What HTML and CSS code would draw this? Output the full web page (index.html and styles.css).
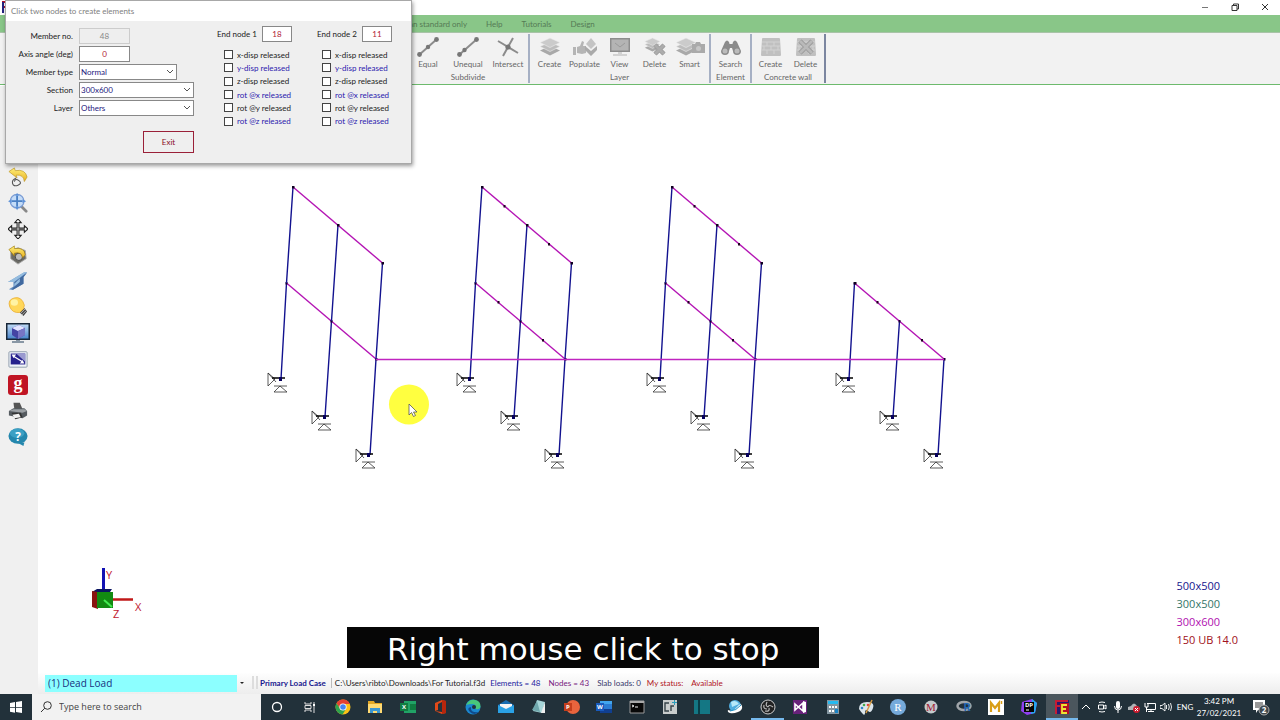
FILE: index.html
```html
<!DOCTYPE html>
<html lang="en">
<head>
<meta charset="utf-8">
<title>Frame modeller</title>
<link rel="stylesheet" href="styles.css">
</head>
<body>
<svg class="defs" aria-hidden="true">
  <defs>
    <linearGradient id="gold" x1="0" y1="0" x2="0" y2="1"><stop offset="0" stop-color="#fff07a"/><stop offset="1" stop-color="#e8b020"/></linearGradient>
    <linearGradient id="screen" x1="0" y1="0" x2="0" y2="1"><stop offset="0" stop-color="#bcd8f4"/><stop offset="1" stop-color="#4b86cc"/></linearGradient>
    <symbol id="layers" viewBox="0 0 22 20"><path d="M11 9l10 4.500-10 5-10-5z" fill="#a9a9a9"/><path d="M11 5l10 4.500-10 5-10-5z" fill="#bdbdbd" stroke="#eee" stroke-width=".6"/><path d="M11 1l10 4.500-10 5-10-5z" fill="#cbcbcb" stroke="#eee" stroke-width=".6"/></symbol>
    <symbol id="wall" viewBox="0 0 22 20"><path d="M2 2q0-1 1-1h16q1 0 1 1l1 16q0 1-1 1H2q-1 0-1-1z" fill="#c0c0c0"/><path d="M2 5h18M2 9h18M2 13h18M7 5v4M14 5v4M4 9v4M11 9v4M18 9v4M7 13v4M14 13v4" stroke="#d2d2d2" fill="none"/></symbol>
    <symbol id="pin" viewBox="-16 -10 26 26"><g fill="none" stroke="#333" stroke-width=".8"><path d="M-13-6V7L-6 0zM-13-6L-5 3M-7 7H6M-1 7L-7 13H6z"/><path d="M-9-1H4" stroke="#000" stroke-width="1.500"/></g><path d="M-2-2h3v4h-3z" fill="#06005c"/></symbol>
    <g id="supports"><use href="#pin" x="265" y="369" width="26" height="26"/><use href="#pin" x="309" y="407" width="26" height="26"/><use href="#pin" x="353" y="445" width="26" height="26"/></g>
    <g id="storey">
      <g stroke="#12128f" stroke-width="1.400"><path d="M286.500 283L281 379M331.500 321L325 417M376 359L370 455"/></g>
      <path d="M286.500 283L376 359" stroke="#b414b4" stroke-width="1.400"/>
      <path d="M285.500 282h2v2.500h-2zM330.500 320h2v2.500h-2zM375.500 358h2v2.500h-2z" fill="#180030"/>
      <use href="#supports"/>
    </g>
    <g id="upper">
      <path d="M293 187L286.500 283M338 225L331.500 321M382.500 263L376 359" stroke="#12128f" stroke-width="1.400"/>
      <path d="M293 187L382.500 263" stroke="#b414b4" stroke-width="1.400"/>
      <path d="M292 186h2.500v2.500h-2.500zM337 224h2.500v2.500h-2.500zM381.500 262h2.500v2.500h-2.500z" fill="#100020"/>
    </g>
    <path id="mid-low" d="M308.500 301h2v2.500h-2zM353 339h2v2.500h-2z" fill="#200020"/>
    <path id="mid-high" d="M314.500 205h2v2.500h-2zM359 243h2v2.500h-2z" fill="#200020"/>
  </defs>
</svg>

<div class="app">
  <header class="titlebar">
    <svg class="logo" viewBox="0 0 12 12"><path d="M1 1h9M1 6h7" stroke="#b0102a" stroke-width="2"/><path d="M2 1v11" stroke="#23237f" stroke-width="2"/></svg>
    <div class="window-buttons">
      <button aria-label="Minimise"><svg viewBox="0 0 8 8"><path d="M1 4.500h6" stroke="#777"/></svg></button>
      <button aria-label="Restore"><svg viewBox="0 0 8 8"><path d="M1 2.500h5v5H1zM2.500 2.500V1h5v5H6" fill="none" stroke="#333"/></svg></button>
      <button aria-label="Close"><svg viewBox="0 0 8 8"><path d="M1 1l6 6M7 1L1 7" fill="none" stroke="#333"/></svg></button>
    </div>
  </header>
  <nav class="menu">
    <a href="#">an standard only</a><a href="#">Help</a><a href="#">Tutorials</a><a href="#">Design</a>
  </nav>
  <section class="ribbon">
    <div class="group subdivide">
      <div class="tools">
        <button><svg viewBox="0 0 22 20"><path d="M2 18L20 2" stroke="#8c8c8c" stroke-width="2"/><g fill="#777"><circle cx="2.500" cy="17.500" r="2.400"/><circle cx="11" cy="10" r="2.200"/><circle cx="19.500" cy="2.500" r="2.400"/></g></svg>Equal</button>
        <button><svg viewBox="0 0 22 20"><path d="M2 18L20 2" stroke="#8c8c8c" stroke-width="2"/><g fill="#777"><circle cx="2.500" cy="17.500" r="2.400"/><circle cx="7.500" cy="13" r="2.200"/><circle cx="19.500" cy="2.500" r="2.400"/></g></svg>Unequal</button>
        <button><svg viewBox="0 0 22 20"><path d="M1 4l20 12M16 1L6 19" stroke="#8c8c8c" stroke-width="2"/><circle cx="11" cy="10" r="2.600" fill="#777"/></svg>Intersect</button>
      </div>
      <span>Subdivide</span>
    </div>
    <div class="group">
      <div class="tools">
        <button><svg viewBox="0 0 22 20"><use href="#layers"/></svg>Create</button>
        <button><svg class="wide" viewBox="0 0 26 20"><path d="M1 10h3v8H1zM5 10l3-1 2-5 2 1-1 4h3v7l-4 1-5-1z" fill="#b5b5b5"/><path d="M19 1l5 6-5 5-5-5z" fill="#c4c4c4"/><path d="M13 9l6 5 6-5v4l-6 6-6-6z" fill="#aaa"/></svg>Populate</button>
        <button><svg viewBox="0 0 22 20"><path d="M1 1h20v14H1z" fill="#8d8d8d"/><path d="M2.500 2.500h17v11h-17z" fill="#b4b4b4"/><path d="M6 6l5 4 5-4" fill="none" stroke="#9a9a9a"/><path d="M9 15h4v2h5v2H4v-2h5z" fill="#d2d2d2"/></svg>View</button>
        <button><svg viewBox="0 0 22 20"><use href="#layers" x="0" y="0" width="17" height="16"/><path d="M11 8l9 9M20 8l-9 9" stroke="#999" stroke-width="4.500"/><path d="M11 8l9 9M20 8l-9 9" stroke="#acacac" stroke-width="3"/></svg>Delete</button>
        <button><svg class="wide" viewBox="0 0 30 20"><use href="#layers" x="0" y="0" width="22" height="20"/><path d="M17 7h3l1-2h4l1 2h4v9H17z" fill="#aaa"/><circle cx="23.500" cy="11.500" r="2.500" fill="#c6c6c6"/></svg>Smart</button>
      </div>
      <span>Layer</span>
    </div>
    <div class="group">
      <div class="tools">
        <button><svg viewBox="0 0 22 20"><path d="M5 5q2-3 4 0l.5 2h3l.5-2q2-3 4 0l4 9q0 4-4 4t-4-4l-1-3h-2l-1 3q0 4-4 4t-4-4z" fill="#8b8b8b"/><circle cx="5" cy="14" r="2.500" fill="#bbb"/><circle cx="17" cy="14" r="2.500" fill="#bbb"/></svg>Search</button>
      </div>
      <span>Element</span>
    </div>
    <div class="group last">
      <div class="tools">
        <button><svg viewBox="0 0 22 20"><use href="#wall"/></svg>Create</button>
        <button><svg viewBox="0 0 22 20"><use href="#wall"/><path d="M5 4l12 12M17 4L5 16" stroke="#929292" stroke-width="4.500"/><path d="M5 4l12 12M17 4L5 16" stroke="#b9b9b9" stroke-width="3"/></svg>Delete</button>
      </div>
      <span>Concrete wall</span>
    </div>
  </section>

  <main class="work">
    <aside class="sidebar">
      <button aria-label="Rotate"><svg viewBox="0 0 22 22"><path d="M1 5l6-4 1 3q11-2 13 7l-3 5q-1-8-9-7l1 3z" fill="url(#gold)" stroke="#bb9420" stroke-width=".7"/><path d="M9 12q-5 2-4 6t6 2 1-5-5 1" fill="none" stroke="#555" stroke-width="1.200"/></svg></button>
      <button aria-label="Zoom extents"><svg viewBox="0 0 22 22"><path d="M14 14l6 6" stroke="#888" stroke-width="3" stroke-linecap="round"/><circle cx="10" cy="9" r="7.500" fill="#c4dcf8" stroke="#7a9cd4" stroke-width="1.500"/><path d="M10 3v12M4 9h12" stroke="#4a80c4" stroke-width="2"/><path d="M10 0l2 3H8zM0 9l4-2v4zM20 9l-4-2v4zM10 19l-2-4h4z" fill="#5c91d8"/></svg></button>
      <button aria-label="Pan"><svg viewBox="0 0 22 22"><path d="M11 0l3.500 4H12v6h6V7.500l4 3.500-4 3.500V12h-6v6h2.500L11 22l-3.500-4H10v-6H4v2.500L0 11l4-3.500V10h6V4H7.500z" fill="#fff" stroke="#222" stroke-width="1.200"/></svg></button>
      <button aria-label="Reset view"><svg viewBox="0 0 22 22"><path d="M3 6l8-3 8 3 1 9-9 6-8-6z" fill="#6b6b65" stroke="#aaa"/><circle cx="12" cy="13" r="4" fill="#bbb" stroke="#444"/><path d="M1 5l6-4v3q11-2 12 7l-3 3q-1-7-9-5v3z" fill="url(#gold)" stroke="#9d780a" stroke-width=".7"/></svg></button>
      <button aria-label="Steel sections"><svg viewBox="0 0 22 22"><path d="M0 12L17 2l4-1-4 5v8L5 21l-4-1 5-3v-5z" fill="#638fc2"/><path d="M0 12L18 1h3L7 12zM7 12v5l9-7V6z" fill="#96bddf"/><path d="M7 12L21 2l-4 5v7L5 21v-2l8-7V8l-6 6z" fill="#41699f"/></svg></button>
      <button aria-label="Hints"><svg viewBox="0 0 22 22"><path d="M13 17l5-5 3 4-4 5z" fill="#444"/><path d="M14 18l5-5M15 20l5-5" stroke="#bbb"/><path d="M2 11Q-1 3 7 1t11 8l-1 4-4 4Q5 18 2 11z" fill="#ffd75a" stroke="#e8a828" stroke-width=".8"/><ellipse cx="7" cy="6" rx="4" ry="3.500" fill="#fff3a4"/></svg></button>
      <button aria-label="3D view"><svg class="big" viewBox="0 0 26 22"><path d="M1 1h24v17H1z" fill="#172638"/><path d="M2.500 2.500h21v14h-21z" fill="url(#screen)"/><path d="M7 6l7-3 6 3v7l-7 4-6-4z" fill="#4444a4"/><path d="M7 6l7-3 6 3-7 3z" fill="#e4e4ff"/><path d="M13 9l7-3v7l-7 4z" fill="#7775c4"/><path d="M11 18h4v1h4v2H7v-2h4z" fill="#8997a5"/></svg></button>
      <button aria-label="Dimension"><svg viewBox="0 0 22 22"><rect x="1" y="3" width="20" height="17" rx="1" fill="#f0f4fa" stroke="#8a98a8"/><path d="M3 5h16v12H3z" fill="#26218d"/><path d="M9 5h10v9z" fill="#9a9ad0"/><path d="M6 8l10 6" stroke="#fff" stroke-width="1.500"/><path d="M4 6h5l-3 4zM18 16h-5l3-4z" fill="#fff"/></svg></button>
      <button aria-label="Search online"><span class="g-icon">g</span></button>
      <button aria-label="Print"><svg viewBox="0 0 22 22"><path d="M6 2h7l3 7H7z" fill="#555"/><path d="M1 11l5-3h12l3 3v5l-5 3-15-3z" fill="#555b60"/><path d="M1 11l5-2h12l3 2-5 2z" fill="#9ba0a4"/><path d="M4 13h10l2 5-8 2z" fill="#333"/><path d="M5 15l7-1 2 4-7 1z" fill="#f2f2f2"/></svg></button>
      <button aria-label="Help"><svg viewBox="0 0 22 22"><ellipse cx="11" cy="10" rx="10.500" ry="8.500" fill="#2487ad"/><path d="M10 17h8l-1 4z" fill="#2487ad"/><ellipse cx="10" cy="7" rx="8" ry="5" fill="#3ba0c4"/><text x="11" y="15" text-anchor="middle" class="help-mark">?</text></svg></button>
    </aside>
    <div class="stage">
      <svg class="model" viewBox="38 86 1242 587" preserveAspectRatio="xMinYMin meet" role="img" aria-label="Structural frame model">
        <use href="#storey"/><use href="#upper"/>
        <g><use href="#storey" x="189"/><use href="#upper" x="189"/><use href="#mid-low" x="189"/><use href="#mid-high" x="189"/></g>
        <g><use href="#storey" x="379"/><use href="#upper" x="379"/><use href="#mid-low" x="379"/><use href="#mid-high" x="379"/></g>
        <g><use href="#storey" x="568"/><use href="#mid-low" x="568"/><path d="M854 282h2.500v2.500h-2.500z" fill="#100020"/></g>
        <path d="M376 359.500H944" stroke="#c024c0" stroke-width="1.400"/>
        <circle cx="409" cy="404.500" r="20" fill="#ffff40"/>
        <path d="M409 404v11l2.500-2.500 2 4 2-1-2-3.500h3.500z" fill="#fff" stroke="#555" stroke-width=".8"/>
        <path d="M103.500 590V568" stroke="#1212b4" stroke-width="3"/>
        <path d="M111 599.500h22" stroke="#c01818" stroke-width="2.500"/>
        <path d="M92 592l5-3h15l-2 3z" fill="#0a1460"/><path d="M92 591l6 1v17l-6-2z" fill="#881410"/>
        <path d="M97 592h16v16H97z" fill="#128a12"/><path d="M104 600l8 7" stroke="#42ec50" stroke-width="2"/>
        <g class="axis"><text x="106" y="579">Y</text><text x="135" y="611">X</text><text x="113" y="618">Z</text></g>
      </svg>
      <ul class="legend"><li>500x500</li><li>300x500</li><li>300x600</li><li>150 UB 14.0</li></ul>
      <p class="caption">Right mouse click to stop</p>
    </div>
  </main>

  <footer class="status">
    <div class="load"><select aria-label="Load case"><option>(1) Dead Load</option></select></div>
    <i class="grip"></i>
    <strong>Primary Load Case</strong>
    <span class="path">C:\Users\ribto\Downloads\For Tutorial.f3d</span>
    <span class="elements">Elements = 48</span>
    <span class="nodes">Nodes = 43</span>
    <span class="slabs">Slab loads: 0</span>
    <span class="mine">My status:</span>
    <span class="mine">Available</span>
  </footer>

  <footer class="taskbar">
    <button class="start" aria-label="Start"><svg viewBox="0 0 12 12"><path d="M0 2l5-1v5H0zM6 1l6-1v6H6zM0 6.700h5v5l-5-1zM6 6.700h6V12l-6-1z" fill="#fff"/></svg></button>
    <label class="search"><svg viewBox="0 0 12 12"><circle cx="7.500" cy="4.500" r="3.800" fill="none" stroke="#333"/><path d="M4.800 7.200L1 11" stroke="#333"/></svg><input type="text" placeholder="Type here to search" aria-label="Search"></label>
    <div class="apps">
      <button aria-label="Cortana"><svg viewBox="0 0 16 16"><circle cx="8" cy="8" r="4.500" fill="none" stroke="#fff" stroke-width="1.300"/></svg></button>
      <button aria-label="Task view"><svg viewBox="0 0 16 16"><path d="M3 3v2h6V3M3 13v-2h6v2M3 6.500h6v3H3zM12 3v2M12 7v7" fill="none" stroke="#ddd"/><path d="M11 5h2v2h-2z" fill="#fff"/></svg></button>
      <button aria-label="Chrome"><svg viewBox="0 0 16 16"><circle cx="8" cy="8" r="7.500" fill="#fbc116"/><path d="M1.500 4.300A7.500 7.500 0 0 1 14.800 5H8L5 9.500z" fill="#e34133"/><path d="M1.500 4.300A7.500 7.500 0 0 0 7.500 15.500L11 10 5 9.500z" fill="#2da24e"/><circle cx="8" cy="8" r="3.600" fill="#fff"/><circle cx="8" cy="8" r="2.800" fill="#4285f4"/></svg></button>
      <button aria-label="File Explorer"><svg viewBox="0 0 16 16"><path d="M1 2h6l1 2h7v10H1z" fill="#e3a827"/><path d="M1 5h14v9H1z" fill="#ffda73"/><path d="M3 9h10v5h-3v-2H6v2H3z" fill="#3c97d2"/></svg></button>
      <button aria-label="Excel"><svg viewBox="0 0 16 16"><path d="M4 2h12v12H4z" fill="#21a366"/><path d="M10 5h6v6h-6z" fill="#107c41"/><path d="M0 4h8v8H0z" fill="#107c41"/><text class="app-letter" x="4" y="10">X</text></svg></button>
      <button aria-label="Office"><svg viewBox="0 0 16 16"><path d="M2 4l7-3 4 1v12l-4 1-7-3 7 1V3L5 5v6l-3 1z" fill="#e24a19"/><path d="M9 1l4 1v12l-4 1z" fill="#b6260c"/></svg></button>
      <button aria-label="Edge"><svg viewBox="0 0 16 16"><circle cx="8" cy="8" r="7.500" fill="#1b88d0"/><path d="M1 6Q4 0 10 1t5.500 7q-1 3-5 2 1-5-3-5T1 6z" fill="#48c77b"/><path d="M6 8q-1 6 8 5-5 4-9 0T6 8z" fill="#104b8c"/><circle cx="9" cy="8" r="2" fill="#23323a"/></svg></button>
      <button aria-label="Mail"><svg viewBox="0 0 16 16"><path d="M0 6l8-5 8 5v8H0z" fill="#176cb0"/><path d="M2 5h12v5H2z" fill="#f4f4f4"/><path d="M0 6l8 4 8-4v8H0z" fill="#2aa1e5"/></svg></button>
      <button aria-label="Notepad"><svg viewBox="0 0 16 16"><path d="M6 1l8 2-3 11-9-2z" fill="#a6d5d8"/><path d="M6 2l-5 9 8 2z" fill="#6fa7ac"/><path d="M14 3v11h-4z" fill="#eee"/></svg></button>
      <button aria-label="PowerPoint"><svg viewBox="0 0 16 16"><circle cx="9" cy="8" r="7" fill="#e9643d"/><path d="M0 4h8v8H0z" fill="#c43e1c"/><text class="app-letter" x="4" y="10">P</text></svg></button>
      <button aria-label="Word"><svg viewBox="0 0 16 16"><path d="M4 2h12v12H4z" fill="#2b7cd3"/><path d="M4 2h12v3H4z" fill="#41a5ee"/><path d="M4 10h12v4H4z" fill="#103f91"/><path d="M0 4h8v8H0z" fill="#185abd"/><text class="app-letter" x="4" y="10">W</text></svg></button>
      <button aria-label="Command Prompt"><svg viewBox="0 0 16 16"><path d="M1 2h14v12H1z" fill="#080808" stroke="#999"/><path d="M1 2h14v2H1z" fill="#aaa"/><path d="M3 6l2 1-2 1M6 8h3" fill="none" stroke="#eee"/></svg></button>
      <button aria-label="Character tool"><svg viewBox="0 0 16 16"><path d="M1 1h14v14H1z" fill="#c8cccc"/><path d="M7 4H3v8h4M9 12V7h3" fill="none" stroke="#354248" stroke-width="1.400"/><path d="M12.500 1v5M10 3.500h5" stroke="#2c9ebc"/></svg></button>
      <button aria-label="Panels"><svg viewBox="0 0 16 16"><path d="M0 1h16v14H0z" fill="#147784"/><path d="M5 1v14" stroke="#062b34" stroke-width="1.500"/></svg></button>
      <button aria-label="Browser"><svg viewBox="0 0 16 16"><circle cx="8" cy="7" r="6" fill="#50aee0"/><path d="M4 3q5-3 8 2l-7 3z" fill="#b7e9fa"/><path d="M1 11q5 2 9-3t5-1-4 6-8 1-2-3z" fill="#fff"/><path d="M3 12q6 0 11-6" stroke="#178dc4" fill="none"/></svg></button>
      <button class="running" aria-label="OBS"><svg viewBox="0 0 16 16"><circle cx="8" cy="8" r="7" fill="#222" stroke="#ccc"/><path d="M7 3q-2 4 1 5M13 8q-4-3-5 0M5 12q5 1 4-3M4 6q-1 4 3 4" fill="none" stroke="#bbb" stroke-width="1.200"/></svg></button>
      <button aria-label="Visual Studio"><svg viewBox="0 0 16 16"><path d="M1 1h14v14H1z" fill="#68217a"/><path d="M3 5l8 7V4l-8 7z" fill="none" stroke="#fff" stroke-width="1.600"/><path d="M11 2l3 1v10l-3 1z" fill="#fff"/></svg></button>
      <button aria-label="Calculator"><svg viewBox="0 0 16 16"><path d="M2 1h12v14H2z" fill="#8496a1"/><path d="M3 2h10v3H3z" fill="#26baf0"/><path d="M4 7h2v2H4zM7 7h2v2H7zM10 7h2v2h-2zM4 11h2v2H4zM7 11h2v2H7z" fill="#fff"/><path d="M10 10h3v4h-3z" fill="#1b83c4"/></svg></button>
      <button aria-label="Paint"><svg viewBox="0 0 16 16"><path d="M1 10q0-7 8-7t6 6-5 3-3 2-6-4z" fill="#dce5eb"/><circle cx="4" cy="9" r="1.300" fill="#3084c4"/><circle cx="6" cy="6" r="1.300" fill="#43aa4b"/><circle cx="10" cy="6" r="1.300" fill="#e1423e"/><path d="M14 1L8 14" stroke="#d59a43" stroke-width="1.500"/></svg></button>
      <button aria-label="RStudio"><svg viewBox="0 0 16 16"><circle cx="8" cy="8" r="8" fill="#75aadb"/><text class="serif-letter" x="8" y="12">R</text></svg></button>
      <button aria-label="MikTeX"><svg viewBox="0 0 16 16"><circle cx="8" cy="8" r="6.500" fill="#c5cacc"/><text class="serif-letter red" x="8" y="12">M</text></svg></button>
      <button aria-label="R"><svg viewBox="0 0 16 16"><ellipse cx="8" cy="7" rx="6.500" ry="4" fill="none" stroke="#a0a5aa" stroke-width="2.500"/><text class="r-letter" x="11" y="12">R</text></svg></button>
      <button aria-label="Miro"><svg viewBox="0 0 16 16"><path d="M0 0h16v16H0z" fill="#fff"/><path d="M3 13V4l4 5 4-5v9" fill="none" stroke="#d99e17" stroke-width="2.200"/><path d="M13.500 2v3" stroke="#d99e17" stroke-width="1.500"/></svg></button>
      <button aria-label="dotPeek"><svg viewBox="0 0 16 16"><path d="M1 3l10-3 5 4-2 10-8 2-6-4z" fill="#8f3ff2"/><path d="M11 0l5 4-2 10-4 1z" fill="#25a7ee"/><path d="M3 3h10v10H3z" fill="#050505"/><text class="app-letter" x="8" y="8">DP</text><path d="M5 11h3" stroke="#fff"/></svg></button>
      <button class="running current" aria-label="Frame modeller"><svg viewBox="0 0 16 16"><path d="M1 1h14v14H1z" fill="#251a70"/><path d="M2 15V2h12M2 7h5" stroke="#c51c35" stroke-width="2" fill="none"/><path d="M6 4h9v11H6z" fill="#b51025"/><path d="M13 6H8v8h5M8 10h4" stroke="#eee332" stroke-width="1.800" fill="none"/></svg></button>
    </div>
    <div class="tray">
      <button aria-label="Hidden icons"><svg viewBox="0 0 12 12"><path d="M2 8l4-4 4 4" fill="none" stroke="#fff"/></svg></button>
      <button aria-label="Meet now"><svg viewBox="0 0 12 12"><path d="M2.500 4h5v4h-5zM7.500 5.500L10 4v4L7.500 6.500M3 1.500q3-1 6 0M3 10.500q3 1 6 0" fill="none" stroke="#fff"/></svg></button>
      <button aria-label="Microphone"><svg viewBox="0 0 12 12"><rect x="4" y="0" width="4" height="8" rx="2" fill="#fff"/><path d="M2.500 5q0 4 3.500 4t3.500-4M6 9v3" fill="none" stroke="#fff"/></svg></button>
      <button aria-label="OneDrive"><svg viewBox="0 0 12 12"><path d="M0 9V6l3-1q3-5 6 0l3 2v2z" fill="#aeb3b6"/><circle cx="8.500" cy="8.500" r="3.400" fill="#ce1b2e"/><path d="M7 7l3 3M10 7l-3 3" stroke="#fff"/></svg></button>
      <button aria-label="Network"><svg viewBox="0 0 12 12"><path d="M3 2.500h8.500v6H3M7 8.500v2M4 10.500h6M1 2v4h3V2M2.500 6v5" fill="none" stroke="#fff"/></svg></button>
      <button aria-label="Volume"><svg viewBox="0 0 12 12"><path d="M0 4.500h2L5 2v8L2 7.500H0zM6.500 4v4M8.500 3q1.500 3 0 6M10.500 2q2 4 0 8" fill="none" stroke="#fff" stroke-width=".9"/></svg></button>
      <span class="lang">ENG</span>
      <time class="clock">3:42 PM<br>27/02/2021</time>
      <button class="notes" aria-label="Notifications"><svg viewBox="0 0 18 18"><path d="M1 2h12v10H6l-2 3v-3H1z" fill="#fff"/><path d="M3 5h8M3 7h8M3 9h5" stroke="#333"/><circle cx="12" cy="12" r="5" fill="#40484d" stroke="#aaa"/><text class="badge" x="12" y="15">2</text></svg></button>
    </div>
  </footer>
</div>

<section class="dialog" role="dialog" aria-label="Click two nodes to create elements">
  <h1>Click two nodes to create elements</h1>
  <form>
    <div class="fields">
      <label for="no">Member no.</label><input id="no" class="short" value="48" disabled>
      <label for="angle">Axis angle (deg)</label><input id="angle" class="short" value="0">
      <label for="type">Member type</label><select id="type" class="medium"><option>Normal</option></select>
      <label for="section">Section</label><select id="section"><option>300x600</option></select>
      <label for="layer">Layer</label><select id="layer"><option>Others</option></select>
      <button type="button" class="exit">Exit</button>
    </div>
    <div class="node">
      <div class="node-id"><label for="n1">End node 1</label><input id="n1" value="18"></div>
      <div class="checks">
        <label><input type="checkbox">x-disp released</label><label><input type="checkbox">y-disp released</label>
        <label><input type="checkbox">z-disp released</label><label><input type="checkbox">rot @x released</label>
        <label><input type="checkbox">rot @y released</label><label><input type="checkbox">rot @z released</label>
      </div>
    </div>
    <div class="node second">
      <div class="node-id"><label for="n2">End node 2</label><input id="n2" value="11"></div>
      <div class="checks">
        <label><input type="checkbox">x-disp released</label><label><input type="checkbox">y-disp released</label>
        <label><input type="checkbox">z-disp released</label><label><input type="checkbox">rot @x released</label>
        <label><input type="checkbox">rot @y released</label><label><input type="checkbox">rot @z released</label>
      </div>
    </div>
  </form>
</section>
</body>
</html>
```
FILE: styles.css
```css
* { box-sizing: border-box; }
body { margin: 0; font: 8px/10px Lato, "Noto Sans", sans-serif; color: #222; background: #fff; }
button, input, select { font: inherit; color: inherit; margin: 0; padding: 0; border: 0; background: none; border-radius: 0; }
svg { display: block; flex: none; }
.defs { position: absolute; width: 0; height: 0; }
.app { min-height: 100vh; display: flex; flex-direction: column; }

.titlebar { height: 15px; display: flex; justify-content: space-between; padding: 1px 0 0 1px; }
.logo { width: 12px; height: 12px; }
.window-buttons { display: flex; }
.window-buttons button { width: 30px; display: flex; justify-content: center; padding-top: 2px; }
.window-buttons svg { width: 8px; height: 8px; }

.menu { height: 18px; display: flex; align-items: center; gap: 19px; padding-left: 409px; background: #89c688; border-bottom: 1px solid #a9c3a8; }
.menu a { color: #557a55; text-decoration: none; }

.ribbon { height: 52px; display: flex; padding: 1px 0 1px 408px; background: #f2f2f2; border-bottom: 1px solid #6dba6d; color: #666; }
.group { display: flex; flex-direction: column; align-items: center; padding: 0 2px; border-right: 2px solid #a6b0c4; }
.subdivide { padding: 0; }
.last { padding: 0 1px; border-right-color: #7c86a0; }
.tools { display: flex; }
.tools button { width: 35px; display: flex; flex-direction: column; align-items: center; gap: 2px; padding-top: 3px; white-space: nowrap; }
.subdivide button { width: 40px; }
.tools svg { width: 22px; height: 20px; }
.tools .wide { width: 30px; }
.group > span { padding-top: 3px; white-space: nowrap; }

.work { flex: 1; display: flex; border-top: 1px solid #fff; }
.sidebar { width: 38px; flex: none; background: #f0f0f0; padding-top: 78px; }
.sidebar button { display: flex; width: 36px; height: 26px; align-items: center; justify-content: center; }
.sidebar svg { width: 20px; height: 20px; }
.sidebar .big { width: 26px; height: 22px; }
.g-icon { width: 20px; height: 20px; border-radius: 3px; background: #c01524; color: #fff; font: bold 18px/16px "Liberation Serif", serif; }
.help-mark { font: bold 13px "Open Sans", sans-serif; fill: #fff; }
.stage { flex: 1; position: relative; }
.model { width: 100%; height: auto; }
.axis { font: 11px "Open Sans", sans-serif; fill: #c01830; }
.legend { position: absolute; right: 42px; bottom: 24px; margin: 0; padding: 0; list-style: none; font: 11px/18px "Open Sans", sans-serif; color: #16168e; }
.legend li:nth-child(2) { color: #35766a; }
.legend li:nth-child(3) { color: #b010b0; }
.legend li:nth-child(4) { color: #a01020; }
.caption { position: absolute; left: 309px; bottom: 5px; margin: 0; padding: 4px 40px 0; background: #060606; color: #fff; font: 31px/37px "DejaVu Sans", sans-serif; white-space: nowrap; }

.status { height: 21px; display: flex; align-items: center; gap: 8px; padding: 0 0 2px 45px; background: linear-gradient(90deg, #f0f0f0 38px, transparent 38px), linear-gradient(#fefefe, #ededed); white-space: nowrap; }
.load { display: flex; align-items: center; }
.load::after { content: ""; margin-left: 3px; border: 2px solid transparent; border-top-color: #222; border-bottom: 0; }
.load select { appearance: none; width: 192px; height: 17px; margin-top: 2px; background: #8cffff; color: #16307e; padding-left: 3px; font: 10px/17px "Open Sans", sans-serif; }
.grip { width: 6px; height: 13px; border: solid #ddd; border-width: 0 2px; margin-right: -6px; }
.status strong { color: #16168e; padding-right: 5px; border-right: 1px solid #bbb; margin-right: -5px; }
.path { margin-right: -3px; }
.elements { color: #2424a0; }
.nodes { color: #76207e; }
.slabs { color: #36366a; margin-right: -2px; }
.mine { color: #b01424; }

.taskbar { height: 26px; display: flex; background: #22313a; color: #fff; }
.taskbar button { display: flex; align-items: center; justify-content: center; }
.start { width: 32px; }
.start svg { width: 12px; height: 12px; }
.search { width: 229px; display: flex; align-items: center; gap: 7px; padding-left: 8px; background: #f2f2f2; color: #333; }
.search svg { width: 12px; height: 12px; }
.search input { flex: 1; min-width: 0; font: 9px/16px "Open Sans", sans-serif; outline: 0; }
.search input::placeholder { color: #444; opacity: 1; }
.apps { flex: 0 0 817px; display: flex; }
.apps button { flex: 1; }
.apps svg { width: 16px; height: 16px; }
.running { box-shadow: inset 0 -2px #76b9ed; }
.apps .current { background: #4b565d; }
.app-letter { font: bold 6px "Open Sans", sans-serif; fill: #fff; text-anchor: middle; }
.serif-letter { font: 11px "Liberation Serif", serif; fill: #fff; text-anchor: middle; }
.red { fill: #a02034; }
.r-letter { font: bold 11px Lato, sans-serif; fill: #2369b8; text-anchor: middle; }
.tray { display: flex; align-items: center; flex: 1; padding-right: 3px; }
.tray button { width: 16px; }
.tray svg { width: 12px; height: 12px; }
.lang { width: 22px; text-align: center; }
.clock { width: 46px; text-align: center; line-height: 12px; }
.tray .notes { width: 32px; height: 26px; margin-left: auto; }
.tray .notes svg { width: 18px; height: 18px; }
.badge { font: bold 8px "Open Sans", sans-serif; fill: #fff; text-anchor: middle; }

.dialog { position: absolute; left: 5px; top: 0; width: 407px; background: #efefef; border: 1px solid #a8a8a8; box-shadow: 1px 2px 4px #0006; }
.dialog h1 { margin: 0; padding-left: 5px; background: #fff; font: 8px/20px Lato, sans-serif; color: #808080; }
.dialog form { display: flex; padding: 5px 0 10px; }
.dialog input:not([type]), .dialog select { border: 1px solid #888; background: #fff; height: 16px; }
.dialog input:not([type]) { text-align: center; color: #b01834; }
.fields { display: grid; grid-template-columns: 67px 115px; grid-template-rows: repeat(5, 18px) auto; column-gap: 6px; align-items: center; padding-top: 1px; }
.fields label { text-align: right; }
.fields .short { width: 51px; }
.dialog input:disabled { background: #eee; border-color: #ccc; color: #888; }
.dialog select { appearance: none; width: 115px; padding-left: 1px; color: #26207e; background: #fff url("data:image/svg+xml,%3Csvg xmlns='http://www.w3.org/2000/svg' viewBox='0 0 6 6'%3E%3Cpath d='M0 1l3 3 3-3' fill='none' stroke='%23555'/%3E%3C/svg%3E") no-repeat right 3px center / 6px 6px; }
.dialog .medium { width: 98px; }
.exit { grid-column: 2; justify-self: end; width: 51px; height: 22px; margin-top: 14px; border: 1px solid #9a2038; color: #8c1028; }
.node { margin-left: 23px; }
.node-id { display: flex; align-items: center; gap: 6px; height: 16px; }
.node-id label { width: 39px; white-space: nowrap; }
.node-id input { width: 30px; }
.checks { display: grid; height: 80px; margin: 6px 0 0 7px; }
.checks label { display: flex; align-items: center; gap: 4px; white-space: nowrap; }
.checks label:nth-child(2), .checks label:nth-child(n+4):nth-child(even) { color: #2a1aae; }
.checks input { appearance: none; width: 9px; height: 9px; border: 1px solid #444; background: #fff; }
.second { margin-left: 25px; }
.second .checks { margin-left: 5px; }
```
